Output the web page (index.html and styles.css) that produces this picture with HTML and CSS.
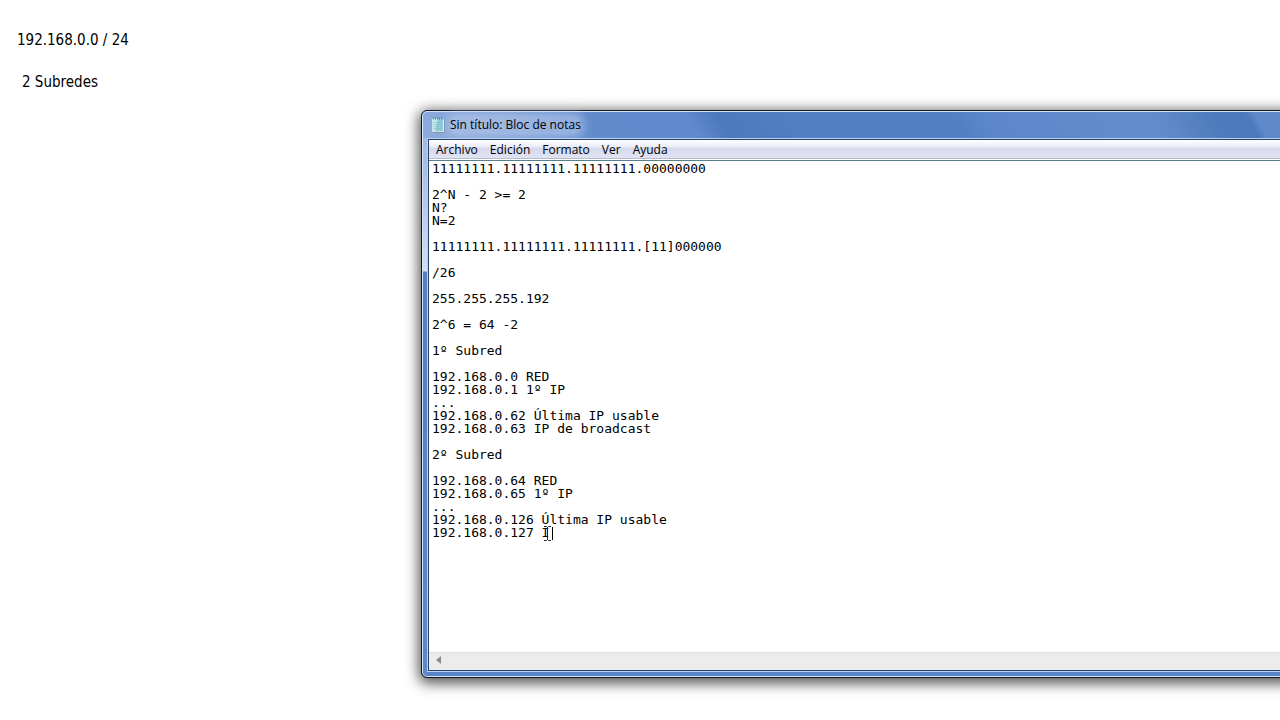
FILE: index.html
```html
<!DOCTYPE html>
<html lang="es">
<head>
  <meta charset="UTF-8" />
  <meta name="viewport" content="width=device-width, initial-scale=1.0" />
  <title>Sin título: Bloc de notas</title>
  <link rel="stylesheet" href="styles.css">
</head>
<body>

  <div class="slide">
    <p>192.168.0.0 / 24</p>
    <p class="indent">2 Subredes</p>
  </div>

  <div class="window">
    <header class="titlebar">
      <svg class="icon" width="14" height="16" viewBox="0 0 14 16">
        <path d="M2 2h11.500v13.500H2z" fill="#5f7f86" />
        <path d="M1 1.500h11.500v13H1z" fill="#8ecbd8" />
        <path d="M1 1.500h6L4 14.500H1z" fill="#c3e9ee" />
        <path d="M2 5.500h9M2 7.500h9M2 9.500h9M2 11.500h9" stroke="#7fbcc8" stroke-width=".5" />
        <path d="M12 2.500h1v12.500H2v-.8h10z" fill="#f3efdc" />
        <path d="M2.500 .5v2M4.500 .5v2M6.500 .5v2M8.500 .5v2M10.500 .5v2" stroke="#5c7880" />
      </svg>
      <h1 class="title">Sin título: Bloc de notas</h1>
    </header>

    <div class="client">
      <nav class="menu">
        <button>Archivo</button>
        <button>Edición</button>
        <button>Formato</button>
        <button>Ver</button>
        <button>Ayuda</button>
      </nav>

      <div class="editor">
        <textarea class="text" aria-label="Texto" wrap="off" spellcheck="false">
11111111.11111111.11111111.00000000

2^N - 2 &gt;= 2
N?
N=2

11111111.11111111.11111111.[11]000000

/26

255.255.255.192

2^6 = 64 -2

1º Subred

192.168.0.0 RED
192.168.0.1 1º IP
...
192.168.0.62 Última IP usable
192.168.0.63 IP de broadcast

2º Subred

192.168.0.64 RED
192.168.0.65 1º IP
...
192.168.0.126 Última IP usable
192.168.0.127 I</textarea>
        <span class="caret"></span>
        <svg class="pointer" width="9" height="17" viewBox="0 0 9 17">
          <path d="M1 1.500h2.500l1 1 1-1H8M4.500 2v13M1 15.500h2.500l1-1 1 1H8" fill="none" stroke="#222" />
        </svg>
      </div>

      <div class="scrollbar">
        <button class="arrow" aria-label="Desplazar a la izquierda">
          <svg width="5" height="8" viewBox="0 0 5 8">
            <path d="M5 0v8L0 4z" fill="#8a8a8a" />
          </svg>
        </button>
      </div>
    </div>
  </div>

</body>
</html>
```

FILE: styles.css
```css
body {
  margin: 0;
  height: 100vh;
  overflow: hidden;
  background: #fff;
  color: #000;
  font-family: "Open Sans", "Noto Sans", sans-serif;
}
.slide {
  padding: 28px 17px;
}
.slide p {
  margin: 0 0 18px;
  font-family: "DejaVu Sans Condensed", "DejaVu Sans", sans-serif;
  font-size: 15px;
  line-height: 24px;
}
.slide .indent {
  padding-left: 5px;
}

/* window frame, runs off the right side of the desktop */
.window {
  position: absolute;
  top: 110px;
  left: 421px;
  right: -20px;
  bottom: 42px;
  box-sizing: border-box;
  display: flex;
  flex-direction: column;
  padding: 0 6px 6px;
  border: 1px solid #10151f;
  border-radius: 6px;
  background:
    linear-gradient(#9db7e0 0, #a9bfe4 60px, #d3def2 160px, #5480c0 161px, #5c88cc 100%) 1px 0 / 5px 100% no-repeat,
    #5a83c6;
  box-shadow: inset 0 0 0 1px #d5e5f8, 0 3px 14px 2px rgba(0,0,0,0.7);
}
.titlebar {
  box-sizing: border-box;
  display: flex;
  align-items: center;
  height: 26px;
  margin: 1px -5px 0;
  padding: 0 8px;
  border-radius: 5px 5px 0 0;
  background: linear-gradient(60deg, #8eabdb 0, #7f9fd7 80px, #628bcd 150px, #5f8acd 240px, #4c79bb 266px, #527fc4 330px, #527fc4 470px, #5c87cb 500px, #628dcd 640px, #4c79bb 700px, #4c79bb 724px, #5e89cb 732px);
}
.icon {
  margin-right: 5px;
}
.title {
  margin: 0;
  font-size: 12px;
  font-weight: normal;
  line-height: 18px;
  border-radius: 8px;
  background: rgba(190,208,238,0.5);
  box-shadow: 0 0 8px 4px rgba(190,208,238,0.5);
}
.client {
  flex: 1;
  display: flex;
  flex-direction: column;
  min-height: 0;
  margin-top: 1px;
  border: 1px solid #27406b;
  background: #fff;
  box-shadow: 0 0 0 1px #bcd3f0;
}
.menu {
  display: flex;
  height: 18px;
  padding-left: 1px;
  border-bottom: 1px solid #b6bbd0;
  background: linear-gradient(#fff 0, #e9ecf8 7px, #d5d9ec 8px, #e0e4f3 100%);
}
.menu button {
  padding: 0 6px;
  border: none;
  background: none;
  color: #000;
  font-family: inherit;
  font-size: 12px;
  line-height: 20px;
}
.editor {
  position: relative;
  flex: 1;
  display: flex;
  min-height: 0;
  margin-top: 1px;
  border-top: 1px solid #56808e;
}
.text {
  flex: 1;
  padding: 1px 3px;
  border: none;
  outline: none;
  resize: none;
  overflow: hidden;
  background: #fff;
  color: #000;
  font-family: "DejaVu Sans Mono", monospace;
  font-size: 13px;
  line-height: 13px;
}
.caret {
  position: absolute;
  top: 366px;
  left: 123px;
  width: 1px;
  height: 13px;
  background: #000;
}
.pointer {
  position: absolute;
  top: 364px;
  left: 114px;
}
.scrollbar {
  display: flex;
  height: 16px;
  border-top: 1px solid #e0e0e0;
  border-bottom: 1px solid #e4f1f8;
  background: #ececec;
}
.arrow {
  display: flex;
  align-items: center;
  padding: 0 7px 3px;
  border: none;
  background: none;
}
```
